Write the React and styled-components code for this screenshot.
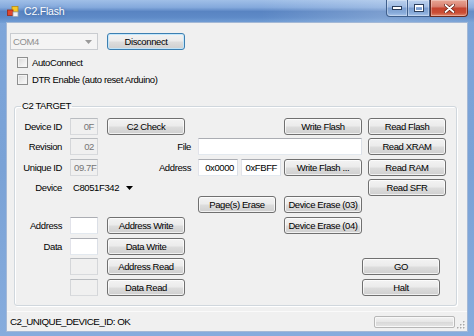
import React from "react";
import styled, { createGlobalStyle, css } from "styled-components";

const FONT = `"Liberation Sans", Arial, sans-serif`;

const GlobalStyle = createGlobalStyle`
  html, body { margin: 0; padding: 0; background: #6f97cc; overflow: hidden; }
  body { font-family: ${FONT}; }
  * { box-sizing: border-box; }
`;

const place = css`
  grid-column: ${(p) => p.$col || "auto"};
  grid-row: ${(p) => p.$row || "auto"};
`;

const Window = styled.div`
  width: 474px;
  height: 336px;
  display: flex;
  flex-direction: column;
  background: linear-gradient(180deg, #7ea6da 0%, #7aa2d6 50%, #86acdd 100%);
  font-family: ${FONT};
  font-size: 9.5px;
  letter-spacing: -0.4px;
  color: #000;
`;

const TitleBar = styled.div`
  height: 23px;
  display: flex;
  align-items: flex-start;
  padding-left: 7px;
  background:
    linear-gradient(90deg, rgba(255,255,255,0) 55%, rgba(255,255,255,0.2) 80%, rgba(255,255,255,0.08) 100%),
    linear-gradient(180deg, #a0bfe7 0%, #84a9dc 32%, #5984c2 50%, #5e8ac7 75%, #74a0d6 100%);
`;

const AppIcon = styled.svg`
  margin-top: 6px;
  flex: none;
`;

const Title = styled.span`
  margin: 5px 0 0 5px;
  line-height: 13px;
  font-size: 10.5px;
  letter-spacing: -0.2px;
  color: #fbfdff;
  text-shadow: 0 0 3px rgba(40, 70, 120, 0.6);
`;

const Caption = styled.div`
  margin-left: auto;
  margin-right: 6px;
  display: flex;
  height: 17px;
`;

const CapButton = styled.div`
  width: ${(p) => p.$w}px;
  height: 17px;
  display: flex;
  align-items: center;
  justify-content: center;
  border: 1px solid ${(p) => (p.$close ? "#6a2a1f" : "#3f5f8c")};
  border-top: none;
  border-left-width: ${(p) => (p.$first || p.$close ? 1 : 0)}px;
  border-radius: ${(p) => (p.$first ? "0 0 0 4px" : p.$close ? "0 0 4px 0" : "0")};
  background: ${(p) =>
    p.$close
      ? "linear-gradient(180deg, #e8a594 0%, #d98272 40%, #c5442f 52%, #cb4d35 80%, #e08a70 100%)"
      : "linear-gradient(180deg, #bcd2ee 0%, #a0bce3 42%, #7c9fd0 52%, #87aad9 80%, #a9c4ea 100%)"};
  box-shadow: inset 0 0 0 1px rgba(255, 255, 255, 0.3);
`;

const Body = styled.div`
  flex: 1;
  display: flex;
  padding: 0 7px 5px 7px;
  min-height: 0;
`;

const Client = styled.div`
  flex: 1;
  display: flex;
  flex-direction: column;
  background: #f0f0f0;
  box-shadow: 0 0 0 1px #a3b8d6;
`;

const ConnectRow = styled.div`
  display: flex;
  gap: 9px;
  padding: 10px 0 0 3px;
  margin-bottom: 4px;
`;

const Combo = styled.div`
  width: ${(p) => p.$w}px;
  height: 17px;
  display: flex;
  align-items: center;
  padding-left: 2px;
  border: 1px solid ${(p) => (p.$disabled ? "#c9ccd0" : "transparent")};
  background: ${(p) => (p.$disabled ? "#f4f4f4" : "transparent")};
  color: ${(p) => (p.$disabled ? "#8f8f8f" : "#000")};
  ${place}
  & > span { flex: 1; }
`;

const Arrow = styled.svg`
  margin-right: ${(p) => p.$mr}px;
  flex: none;
`;

const Button = styled.div`
  width: ${(p) => p.$w || 78}px;
  height: 17px;
  display: flex;
  align-items: center;
  justify-content: center;
  white-space: nowrap;
  border: 1px solid ${(p) => (p.$default ? "#3c7fb1" : "#707070")};
  border-radius: 3px;
  background: linear-gradient(180deg, #f3f3f3 0%, #ebebeb 48%, #dddddd 52%, #cfcfcf 100%);
  box-shadow: inset 0 0 0 1px ${(p) => (p.$default ? "rgba(190,230,253,0.9)" : "rgba(255,255,255,0.7)")};
  ${place}
`;

const CheckRow = styled.label`
  display: flex;
  align-items: center;
  gap: 4px;
  height: 17px;
  padding-left: 10px;
`;

const CheckBox = styled.span`
  width: 11px;
  height: 11px;
  border: 1px solid #8e8f8f;
  background: linear-gradient(135deg, #d8d8d8 0%, #efefef 60%, #fbfbfb 100%);
  box-shadow: inset 0 0 0 1px #f4f4f4;
`;

const GroupBox = styled.fieldset`
  margin: 12px 10px 0 7px;
  padding: 0;
  min-width: 0;
  border: 1px solid #d0d7dd;
  border-radius: 3px;
  box-shadow: inset 1px 1px 0 #fff, 1px 1px 0 #fff;
`;

const Legend = styled.legend`
  margin-left: 6px;
  padding: 0 1px;
  line-height: 12px;
`;

const Grid = styled.div`
  display: grid;
  grid-template-columns: 55px 28px 9px 78px 13px 86px 78px 6px 78px;
  grid-template-rows: 20px 21px 20px 17px 21px 21px 20px 21px 17px;
  align-items: start;
  padding: 6px 0 9px 0;
`;

const Label = styled.span`
  ${place}
  height: 17px;
  line-height: 17px;
  text-align: right;
  white-space: nowrap;
  padding-right: ${(p) => p.$pr ?? 8}px;
`;

const TextBox = styled.div`
  ${place}
  width: ${(p) => (p.$w ? `${p.$w}px` : "100%")};
  height: 17px;
  line-height: 15px;
  padding: 0 3px;
  text-align: right;
  white-space: nowrap;
  overflow: hidden;
  border: 1px solid;
  border-color: ${(p) => (p.$disabled ? "#b9bcc0 #d4d6d9 #d8dadd #d4d6d9" : "#abadb3 #dbdfe6 #e3e9ef #e2e3ea")};
  background: ${(p) => (p.$disabled ? "#f0f0f0" : "#fff")};
  color: ${(p) => (p.$disabled ? "#767676" : "#000")};
`;

const AddressPair = styled.div`
  ${place}
  display: flex;
  gap: 3px;
`;

const StatusBar = styled.div`
  margin-top: auto;
  height: 20px;
  display: flex;
  align-items: center;
  padding-left: 3px;
  border-top: 1px solid #fafafa;
  font-size: 9.8px;
  letter-spacing: -0.55px;
`;

const StatusText = styled.span`
  flex: 1;
`;

const Progress = styled.div`
  width: 81px;
  height: 12px;
  margin-right: 2px;
  border: 1px solid #b7b7b7;
  border-radius: 2px;
  background: linear-gradient(180deg, #f4f4f4 0%, #e6e6e6 48%, #d9d9d9 52%, #e4e4e4 100%);
  box-shadow: inset 0 0 0 1px #f8f8f8;
`;

const Grip = styled.svg`
  align-self: flex-end;
  margin: 0 2px 2px 0;
`;

const DownArrow = ({ color = "#000", mr = 4 }) => (
  <Arrow $mr={mr} width="7" height="4" viewBox="0 0 7 4">
    <path d="M0 0h7L3.5 4z" fill={color} />
  </Arrow>
);

export default function App() {
  return (
    <>
      <GlobalStyle />
      <Window>
        <TitleBar>
          <AppIcon width="12" height="11" viewBox="0 0 12 11">
            <rect x="5" y="0.5" width="6" height="5.5" fill="#f6c928" stroke="#b98a10" strokeWidth="0.8" />
            <rect x="0.5" y="4" width="5.5" height="5.5" fill="#e0452d" stroke="#9a2a18" strokeWidth="0.8" />
            <rect x="6" y="6" width="5" height="4.5" fill="#f2f2f2" stroke="#9aa6b8" strokeWidth="0.8" />
          </AppIcon>
          <Title>C2.Flash</Title>
          <Caption>
            <CapButton $w={22} $first>
              <svg width="10" height="4" viewBox="0 0 10 4">
                <rect x="0.5" y="0.5" width="9" height="3" fill="#fff" stroke="#2c3f5c" strokeWidth="1" />
              </svg>
            </CapButton>
            <CapButton $w={22}>
              <svg width="10" height="8" viewBox="0 0 10 8">
                <rect x="0.5" y="0.5" width="9" height="7" fill="none" stroke="#2c3f5c" strokeWidth="1" />
                <rect x="1.5" y="1.5" width="7" height="5" fill="none" stroke="#fff" strokeWidth="1" />
                <rect x="1.5" y="1.5" width="7" height="1.5" fill="#fff" />
              </svg>
            </CapButton>
            <CapButton $w={38} $close>
              <svg width="11" height="9" viewBox="0 0 11 9">
                <path d="M1.5 1l8 7M9.5 1l-8 7" stroke="#5a1a10" strokeWidth="3.2" strokeLinecap="round" />
                <path d="M1.5 1l8 7M9.5 1l-8 7" stroke="#fff" strokeWidth="1.8" strokeLinecap="round" />
              </svg>
            </CapButton>
          </Caption>
        </TitleBar>
        <Body>
          <Client>
            <ConnectRow>
              <Combo $w={88} $disabled>
                <span>COM4</span>
                <DownArrow color="#9a9a9a" mr={5} />
              </Combo>
              <Button $default>Disconnect</Button>
            </ConnectRow>
            <CheckRow>
              <CheckBox />
              AutoConnect
            </CheckRow>
            <CheckRow>
              <CheckBox />
              DTR Enable (auto reset Arduino)
            </CheckRow>
            <GroupBox>
              <Legend>C2 TARGET</Legend>
              <Grid>
                <Label $col="1" $row="1">Device ID</Label>
                <TextBox $col="2" $row="1" $disabled>0F</TextBox>
                <Button $col="4" $row="1">C2 Check</Button>
                <Button $col="7" $row="1">Write Flash</Button>
                <Button $col="9" $row="1">Read Flash</Button>

                <Label $col="1" $row="2">Revision</Label>
                <TextBox $col="2" $row="2" $disabled>02</TextBox>
                <Label $col="4 / 6" $row="2" $pr={7}>File</Label>
                <TextBox $col="6 / 8" $row="2" $w={164} />
                <Button $col="9" $row="2">Read XRAM</Button>

                <Label $col="1" $row="3">Unique ID</Label>
                <TextBox $col="2" $row="3" $disabled>09.7F</TextBox>
                <Label $col="4 / 6" $row="3" $pr={7}>Address</Label>
                <AddressPair $col="6" $row="3">
                  <TextBox $w={40}>0x0000</TextBox>
                  <TextBox $w={40}>0xFBFF</TextBox>
                </AddressPair>
                <Button $col="7" $row="3">Write Flash ...</Button>
                <Button $col="9" $row="3">Read RAM</Button>

                <Label $col="1" $row="4">Device</Label>
                <Combo $col="2 / 5" $row="4" $w={68}>
                  <span>C8051F342</span>
                  <DownArrow />
                </Combo>
                <Button $col="9" $row="4">Read SFR</Button>

                <Button $col="6" $row="5">Page(s) Erase</Button>
                <Button $col="7" $row="5">Device Erase (03)</Button>

                <Label $col="1" $row="6">Address</Label>
                <TextBox $col="2" $row="6" />
                <Button $col="4" $row="6">Address Write</Button>
                <Button $col="7" $row="6">Device Erase (04)</Button>

                <Label $col="1" $row="7">Data</Label>
                <TextBox $col="2" $row="7" />
                <Button $col="4" $row="7">Data Write</Button>

                <TextBox $col="2" $row="8" $disabled />
                <Button $col="4" $row="8">Address Read</Button>
                <Button $col="8 / 10" $row="8">GO</Button>

                <TextBox $col="2" $row="9" $disabled />
                <Button $col="4" $row="9">Data Read</Button>
                <Button $col="8 / 10" $row="9">Halt</Button>
              </Grid>
            </GroupBox>
            <StatusBar>
              <StatusText>C2_UNIQUE_DEVICE_ID: OK</StatusText>
              <Progress />
              <Grip width="8" height="8" viewBox="0 0 8 8">
                {[
                  [6, 0], [6, 3], [3, 3], [6, 6], [3, 6], [0, 6],
                ].map(([x, y]) => (
                  <g key={`${x}-${y}`}>
                    <rect x={x + 1} y={y + 1} width="1.5" height="1.5" fill="#fff" />
                    <rect x={x} y={y} width="1.5" height="1.5" fill="#a8a8a8" />
                  </g>
                ))}
              </Grip>
            </StatusBar>
          </Client>
        </Body>
      </Window>
    </>
  );
}
